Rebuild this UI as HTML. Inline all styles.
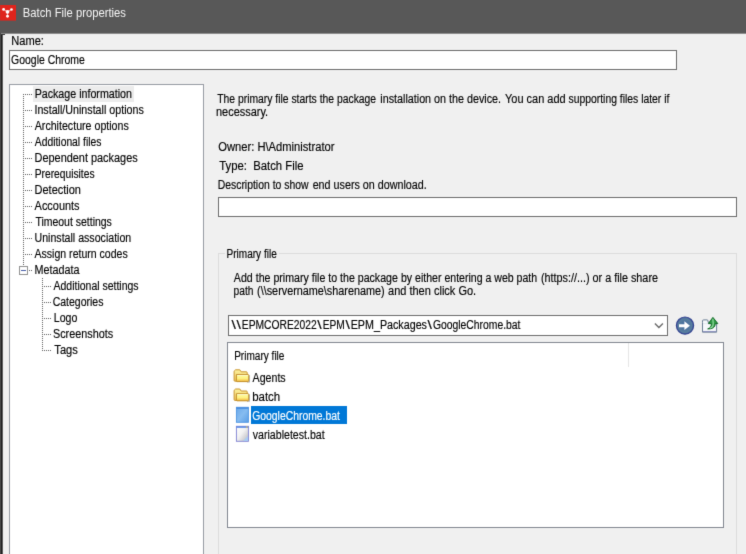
<!DOCTYPE html>
<html>
<head>
<meta charset="utf-8">
<title>Batch File properties</title>
<style>
html,body{margin:0;padding:0;}
body{width:746px;height:554px;overflow:hidden;background:#f0f0f0;position:relative;
  font-family:"Liberation Sans",sans-serif;font-size:12px;color:#1a1a1a;}
#wrap{position:absolute;left:0;top:0;width:746px;height:554px;filter:url(#soft);background:#f0f0f0;}
.abs{position:absolute;}
#titlebar{left:-6px;top:-6px;width:758px;height:39px;background:#585858;}
#edge0{left:-6px;top:33px;width:7px;height:530px;background:#4a4a4a;}
#stripe{left:1px;top:34px;width:2px;height:530px;background:linear-gradient(90deg,#1c1c1c 0,#1c1c1c 50%,#5c5c5c 50%,#5c5c5c 100%);}
#stripecap{left:1px;top:34px;width:4px;height:1px;background:#3a3a3a;}
.inp{position:absolute;background:#fff;border:1px solid #6c6c6c;box-sizing:border-box;}
#tree{left:9px;top:84px;width:195px;height:490px;background:#fff;border:1px solid #979ba3;box-sizing:border-box;}
#tsel{left:33px;top:86px;width:101px;height:16px;background:#ececec;}
#grp{left:218px;top:253px;width:519px;height:320px;border:1px solid #dcdcdc;box-sizing:border-box;}
#legendbg{left:225px;top:250px;width:54px;height:8px;background:#f0f0f0;}
#list{left:227px;top:342px;width:497px;height:186px;background:#fff;border:1px solid #828790;box-sizing:border-box;}
#colsep{left:628px;top:343px;width:1px;height:24px;background:#e5e5e5;}
#sel{left:251px;top:406px;width:96px;height:18px;background:#0078d7;}
svg{position:absolute;left:0;top:0;}
svg text{font-family:"Liberation Sans",sans-serif;font-size:12px;fill:#000;stroke:#000;stroke-width:0.15px;}
</style>
</head>
<body>
<svg width="0" height="0" style="position:absolute"><filter id="soft" x="-2%" y="-2%" width="104%" height="104%" color-interpolation-filters="sRGB"><feConvolveMatrix order="3" kernelMatrix="0.0112 0.0835 0.0112 0.0835 0.6209 0.0835 0.0112 0.0835 0.0112" edgeMode="duplicate" preserveAlpha="true"/></filter></svg>
<div id="wrap">
<div class="abs" style="left:-10px;top:-10px;width:766px;height:574px;background:#f0f0f0"></div>
<div id="titlebar" class="abs"></div>
<div class="abs" style="left:-6px;top:33px;width:758px;height:1px;background:#8a8a8a"></div>
<div id="edge0" class="abs"></div>
<div id="stripe" class="abs"></div>
<div id="stripecap" class="abs"></div>

<div class="inp" style="left:9px;top:50px;width:668px;height:20px"></div>
<div id="tree" class="abs"></div>
<div id="tsel" class="abs"></div>
<div class="inp" style="left:218px;top:197px;width:519px;height:20px"></div>
<div id="grp" class="abs"></div>
<div id="legendbg" class="abs"></div>
<div class="inp" style="left:228px;top:315px;width:440px;height:21px"></div>
<div id="list" class="abs"></div>
<div id="colsep" class="abs"></div>
<div id="sel" class="abs"></div>

<svg width="746" height="554" viewBox="0 0 746 554">
<defs>
  <linearGradient id="fold" x1="0" y1="0" x2="0" y2="1"><stop offset="0" stop-color="#fffd9c"/><stop offset="0.55" stop-color="#fdf184"/><stop offset="1" stop-color="#f4b63e"/></linearGradient>
  <linearGradient id="foldb" x1="0" y1="0" x2="0" y2="1"><stop offset="0" stop-color="#fdf4a0"/><stop offset="1" stop-color="#ecc058"/></linearGradient>
  <linearGradient id="fsel" x1="0" y1="0" x2="1" y2="1"><stop offset="0" stop-color="#69a8ea"/><stop offset="0.5" stop-color="#86bcf0"/><stop offset="1" stop-color="#5a9ee6"/></linearGradient>
  <linearGradient id="fdoc" x1="0" y1="0" x2="1" y2="1"><stop offset="0" stop-color="#ffffff"/><stop offset="0.45" stop-color="#f2f2f2"/><stop offset="1" stop-color="#b4b4ba"/></linearGradient>
  <radialGradient id="go" cx="0.5" cy="0.5" r="0.5"><stop offset="0" stop-color="#3f679f"/><stop offset="0.8" stop-color="#587e9e"/><stop offset="1" stop-color="#465f9c"/></radialGradient>
  <g id="folder">
    <path d="M13.4 12.9 L15.9 12.9 L15.9 6" stroke="#6b6b6b" stroke-opacity="0.55" stroke-width="0.9" fill="none"/>
    <path d="M0.5 11.2 L0.5 2.4 Q0.5 1.6 1.2 1.2 L2 0.6 L6.2 0.6 L7.6 2.6 L12.8 2.6 Q13.6 2.6 13.6 3.6 L13.6 12 L1.4 12 Q0.5 12 0.5 11.2 Z" fill="url(#foldb)" stroke="#c9952f" stroke-width="1"/>
    <path d="M2.8 5.3 L14.4 5.3 Q15.1 5.3 15.1 6 L15.1 11.6 Q15.1 12.4 14.3 12.4 L3.5 12.4 Q2.8 12.4 2.8 11.6 Z" fill="url(#fold)" stroke="#c4902a" stroke-width="1"/>
    <path d="M3.6 6.2 L14.3 6.2" stroke="#fffde0" stroke-width="0.8" fill="none"/>
  </g>
</defs>

<!-- app icon -->
<g transform="translate(0,5)">
  <rect width="16" height="15.6" fill="#df241c"/>
  <g stroke="#f6b0ab" stroke-width="0.9"><line x1="7.5" y1="6.7" x2="3.6" y2="4.4"/><line x1="7.5" y1="6.7" x2="11.5" y2="4.5"/><line x1="7.5" y1="6.7" x2="7.5" y2="11.3"/></g>
  <circle cx="7.5" cy="6.8" r="1.9" fill="#fff"/><circle cx="3.6" cy="4.4" r="1.4" fill="#fff"/><circle cx="11.5" cy="4.5" r="1.3" fill="#fff"/><circle cx="7.5" cy="11.3" r="1.45" fill="#fff"/>
</g>

<!-- tree connector lines -->
<g stroke="#5e5e5e" stroke-width="1" stroke-dasharray="1 1" fill="none" shape-rendering="crispEdges">
  <line x1="23.5" y1="94" x2="23.5" y2="266"/>
  <line x1="23" y1="94.5" x2="32" y2="94.5"/>
  <line x1="23" y1="110.5" x2="32" y2="110.5"/>
  <line x1="23" y1="126.5" x2="32" y2="126.5"/>
  <line x1="23" y1="142.5" x2="32" y2="142.5"/>
  <line x1="23" y1="158.5" x2="32" y2="158.5"/>
  <line x1="23" y1="174.5" x2="32" y2="174.5"/>
  <line x1="23" y1="190.5" x2="32" y2="190.5"/>
  <line x1="23" y1="206.5" x2="32" y2="206.5"/>
  <line x1="23" y1="222.5" x2="32" y2="222.5"/>
  <line x1="23" y1="238.5" x2="32" y2="238.5"/>
  <line x1="23" y1="254.5" x2="32" y2="254.5"/>
  <line x1="29" y1="270.5" x2="32" y2="270.5"/>
  <line x1="42.5" y1="278" x2="42.5" y2="351"/>
  <line x1="42" y1="286.5" x2="51" y2="286.5"/>
  <line x1="42" y1="302.5" x2="51" y2="302.5"/>
  <line x1="42" y1="318.5" x2="51" y2="318.5"/>
  <line x1="42" y1="334.5" x2="51" y2="334.5"/>
  <line x1="42" y1="350.5" x2="51" y2="350.5"/>
</g>
<!-- expander box -->
<rect x="19.5" y="266.5" width="8" height="8" fill="#fff" stroke="#919191" stroke-width="1"/>
<line x1="21" y1="270.5" x2="26" y2="270.5" stroke="#4a5fa8" stroke-width="1" shape-rendering="crispEdges"/>

<!-- combo chevron -->
<path d="M654.9 323.5 L658.9 327.5 L662.9 323.5" fill="none" stroke="#666" stroke-width="1.3"/>

<!-- go icon -->
<circle cx="685" cy="325.6" r="8.6" fill="url(#go)" stroke="#324290" stroke-width="1.2"/>
<path d="M679 324.2 L684.4 324.2 L684.4 321.3 L689.9 325.7 L684.4 330.1 L684.4 327.3 L679 327.3 Z" fill="#fff"/>

<!-- folder-up icon -->
<path d="M702.5 322.3 L702.5 321 Q702.5 319.9 703.6 319.9 L707 319.9 Q708 319.9 708 321 L708 322.3 L716.6 322.3 L716.6 332.2 L702.5 332.2 Z" fill="#f6f8fb" stroke="#6c7f95" stroke-width="1"/>
<path d="M703 323.6 L716 323.6" stroke="#dfe6ee" stroke-width="0.8"/>
<path d="M703 331.5 L716.2 331.5" stroke="#8b90bd" stroke-width="1"/>
<path d="M712.9 317.4 L717.8 323.6 L715.2 323.6 C715.2 327.4 712.6 329.1 707.7 328.9 C710.4 327.9 711.4 326.4 711.4 323.6 L708.4 323.6 Z" fill="#2f9a46" stroke="#0f6a24" stroke-width="1" stroke-linejoin="round"/>
<path d="M712.9 319.4 L713.2 323.8 C713.3 326 712.2 327.3 710.6 328" fill="none" stroke="#9be0a8" stroke-width="1.1" stroke-linecap="round"/>

<!-- list icons -->
<use href="#folder" x="233.6" y="369.2"/>
<use href="#folder" x="233.6" y="388.4"/>
<rect x="236.4" y="407.3" width="12" height="15" fill="url(#fsel)" stroke="#4b93e2" stroke-width="0.9"/>
<line x1="236.4" y1="408.1" x2="248.4" y2="408.1" stroke="#3f86dc" stroke-width="1.3"/>
<rect x="236.4" y="426.3" width="12" height="15" fill="url(#fdoc)" stroke="#7c7fd2" stroke-width="0.9"/>
<path d="M248 436 L248 440.9 L243 440.9 Z" fill="#a9cdf3"/>
<line x1="236.4" y1="427.1" x2="248.4" y2="427.1" stroke="#4f86e4" stroke-width="1.4"/>
<rect x="246.2" y="426.4" width="1.3" height="1.3" fill="#f2c04a"/>

<text y="17" style="fill:#f6f6f6;stroke:none"><tspan x="22.79" textLength="103.22" lengthAdjust="spacingAndGlyphs">Batch File properties</tspan></text>
<text y="45"><tspan x="11.27" textLength="32.66" lengthAdjust="spacingAndGlyphs">Name:</tspan></text>
<text y="64"><tspan x="11.10" textLength="73.73" lengthAdjust="spacingAndGlyphs">Google Chrome</tspan></text>
<text y="98"><tspan x="34.63" textLength="97.33" lengthAdjust="spacingAndGlyphs">Package information</tspan></text>
<text y="114"><tspan x="34.44" textLength="109.30" lengthAdjust="spacingAndGlyphs">Install/Uninstall options</tspan></text>
<text y="130"><tspan x="34.75" textLength="94.02" lengthAdjust="spacingAndGlyphs">Architecture options</tspan></text>
<text y="146"><tspan x="34.84" textLength="66.55" lengthAdjust="spacingAndGlyphs">Additional files</tspan></text>
<text y="162"><tspan x="34.58" textLength="103.09" lengthAdjust="spacingAndGlyphs">Dependent packages</tspan></text>
<text y="178"><tspan x="34.69" textLength="59.82" lengthAdjust="spacingAndGlyphs">Prerequisites</tspan></text>
<text y="194"><tspan x="34.56" textLength="46.43" lengthAdjust="spacingAndGlyphs">Detection</tspan></text>
<text y="210"><tspan x="34.62" textLength="44.91" lengthAdjust="spacingAndGlyphs">Accounts</tspan></text>
<text y="226"><tspan x="35.41" textLength="76.45" lengthAdjust="spacingAndGlyphs">Timeout settings</tspan></text>
<text y="242"><tspan x="34.53" textLength="96.73" lengthAdjust="spacingAndGlyphs">Uninstall association</tspan></text>
<text y="258"><tspan x="34.55" textLength="93.17" lengthAdjust="spacingAndGlyphs">Assign return codes</tspan></text>
<text y="274"><tspan x="34.50" textLength="44.99" lengthAdjust="spacingAndGlyphs">Metadata</tspan></text>
<text y="290"><tspan x="53.55" textLength="85.05" lengthAdjust="spacingAndGlyphs">Additional settings</tspan></text>
<text y="306"><tspan x="52.66" textLength="50.79" lengthAdjust="spacingAndGlyphs">Categories</tspan></text>
<text y="322"><tspan x="53.75" textLength="23.51" lengthAdjust="spacingAndGlyphs">Logo</tspan></text>
<text y="338"><tspan x="52.96" textLength="60.18" lengthAdjust="spacingAndGlyphs">Screenshots</tspan></text>
<text y="354"><tspan x="54.34" textLength="23.47" lengthAdjust="spacingAndGlyphs">Tags</tspan></text>
<text y="103"><tspan x="217.20" textLength="158.90" lengthAdjust="spacingAndGlyphs">The primary file starts the package</tspan> <tspan x="380.29" textLength="120.78" lengthAdjust="spacingAndGlyphs">installation on the device.</tspan> <tspan x="504.98" textLength="60.66" lengthAdjust="spacingAndGlyphs">You can add</tspan> <tspan x="568.49" textLength="100.92" lengthAdjust="spacingAndGlyphs">supporting files later if</tspan></text>
<text y="116"><tspan x="216.01" textLength="52.08" lengthAdjust="spacingAndGlyphs">necessary.</tspan></text>
<text y="151"><tspan x="218.26" textLength="116.23" lengthAdjust="spacingAndGlyphs">Owner: H\Administrator</tspan></text>
<text y="170"><tspan x="219.26" textLength="84.19" lengthAdjust="spacingAndGlyphs">Type:  Batch File</tspan></text>
<text y="189"><tspan x="217.71" textLength="90.78" lengthAdjust="spacingAndGlyphs">Description to show</tspan> <tspan x="312.65" textLength="114.13" lengthAdjust="spacingAndGlyphs">end users on download.</tspan></text>
<text y="258"><tspan x="226.55" textLength="50.18" lengthAdjust="spacingAndGlyphs">Primary file</tspan></text>
<text y="282"><tspan x="233.86" textLength="163.99" lengthAdjust="spacingAndGlyphs">Add the primary file to the package</tspan> <tspan x="400.97" textLength="136.15" lengthAdjust="spacingAndGlyphs">by either entering a web path</tspan> <tspan x="540.88" textLength="117.13" lengthAdjust="spacingAndGlyphs">(https://...) or a file share</tspan></text>
<text y="295"><tspan x="233.61" textLength="19.89" lengthAdjust="spacingAndGlyphs">path</tspan> <tspan x="257.08" textLength="127.53" lengthAdjust="spacingAndGlyphs">(\\servername\sharename)</tspan> <tspan x="388.02" textLength="88.13" lengthAdjust="spacingAndGlyphs">and then click Go.</tspan></text>
<text y="329"><tspan x="231.60" textLength="4.40" lengthAdjust="spacingAndGlyphs">\</tspan><tspan x="236.60" textLength="4.40" lengthAdjust="spacingAndGlyphs">\</tspan><tspan x="241.80" textLength="74.90" lengthAdjust="spacingAndGlyphs">EPMCORE2022</tspan><tspan x="317.20" textLength="4.40" lengthAdjust="spacingAndGlyphs">\</tspan><tspan x="322.70" textLength="22.10" lengthAdjust="spacingAndGlyphs">EPM</tspan><tspan x="345.50" textLength="4.40" lengthAdjust="spacingAndGlyphs">\</tspan><tspan x="350.70" textLength="76.30" lengthAdjust="spacingAndGlyphs">EPM_Packages</tspan><tspan x="427.60" textLength="4.40" lengthAdjust="spacingAndGlyphs">\</tspan><tspan x="432.90" textLength="87.60" lengthAdjust="spacingAndGlyphs">GoogleChrome.bat</tspan></text>
<text y="360"><tspan x="234.17" textLength="50.30" lengthAdjust="spacingAndGlyphs">Primary file</tspan></text>
<text y="382"><tspan x="252.56" textLength="33.12" lengthAdjust="spacingAndGlyphs">Agents</tspan></text>
<text y="401"><tspan x="252.20" textLength="28.04" lengthAdjust="spacingAndGlyphs">batch</tspan></text>
<text y="420" style="fill:#ffffff;stroke:#ffffff"><tspan x="252.22" textLength="87.66" lengthAdjust="spacingAndGlyphs">GoogleChrome.bat</tspan></text>
<text y="439"><tspan x="252.78" textLength="71.89" lengthAdjust="spacingAndGlyphs">variabletest.bat</tspan></text>
</svg>
</div>
</body>
</html>
